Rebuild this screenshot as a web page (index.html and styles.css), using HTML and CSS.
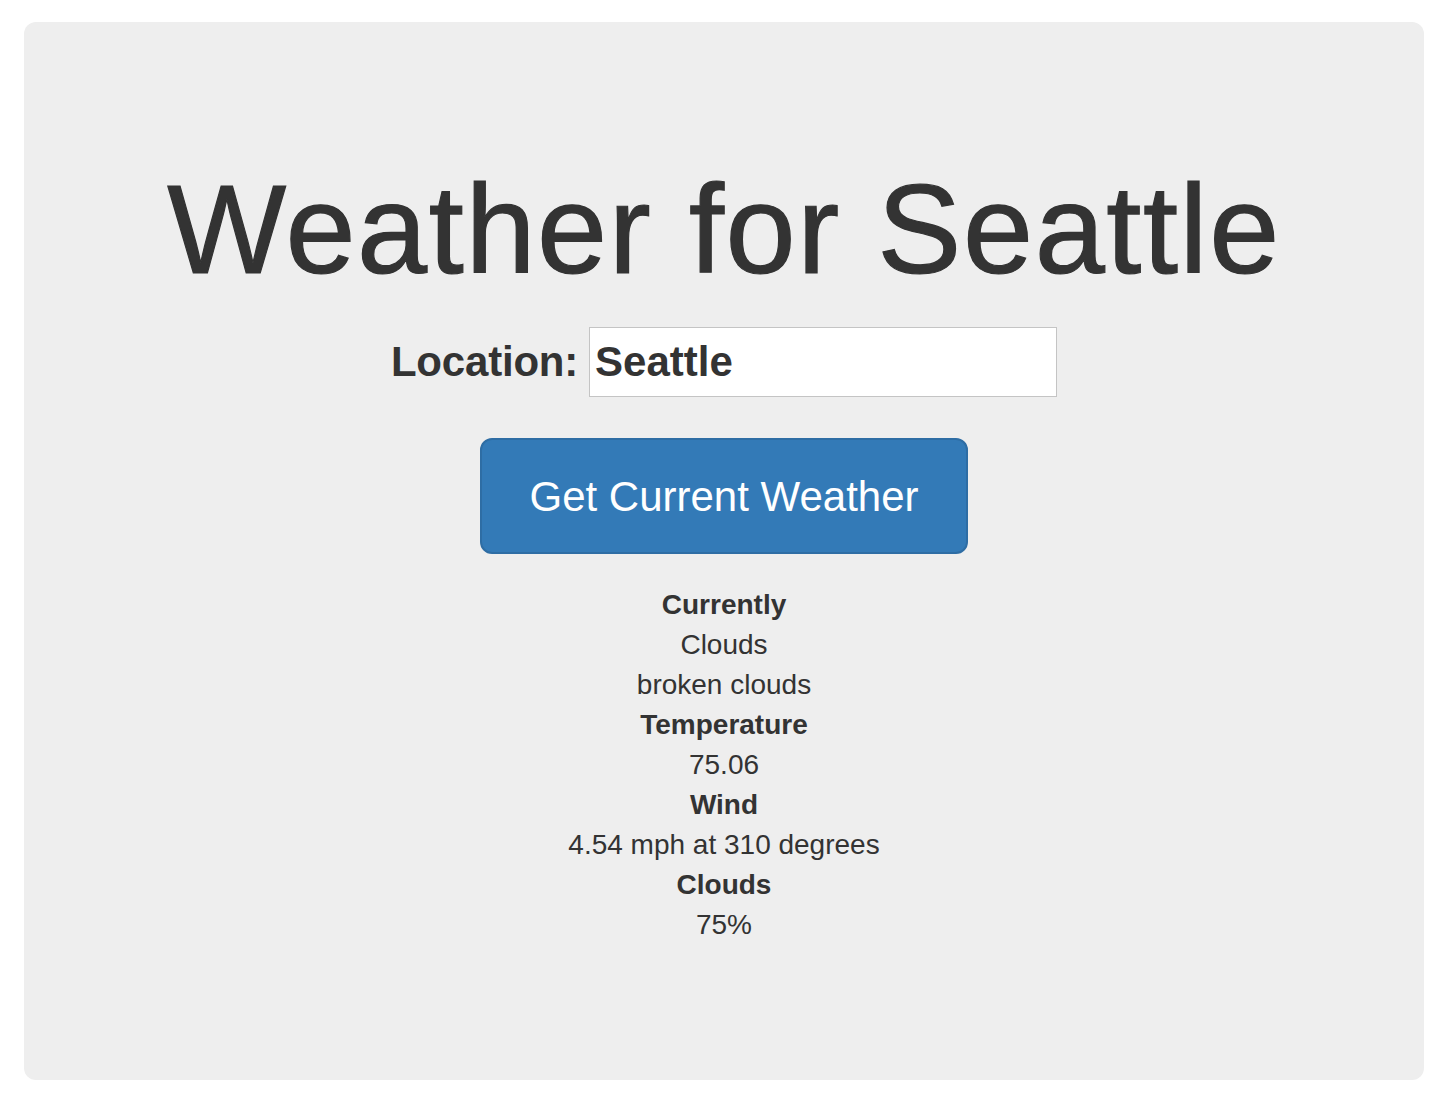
FILE: index.html
```html
<!DOCTYPE html>
<html>
<head>
<meta charset="utf-8">
<title>Weather</title>
<link rel="stylesheet" href="styles.css">
</head>
<body>
<div class="page">
  <div class="jumbotron">
    <h1 class="title">Weather for Seattle</h1>
    <div class="location-row">
      <label class="location-label" for="loc">Location:</label>
      <input id="loc" class="location-input" type="text" value="Seattle">
    </div>
    <button class="btn-primary" type="button">Get Current Weather</button>
    <div class="results">
      <div class="label">Currently</div>
      <div>Clouds</div>
      <div>broken clouds</div>
      <div class="label">Temperature</div>
      <div>75.06</div>
      <div class="label">Wind</div>
      <div>4.54 mph at 310 degrees</div>
      <div class="label">Clouds</div>
      <div>75%</div>
    </div>
  </div>
</div>
</body>
</html>
```

FILE: styles.css
```css
html, body {
  margin: 0;
  padding: 0;
  background: #ffffff;
}

body {
  font-family: "Helvetica Neue", "Liberation Sans", Arial, sans-serif;
  color: #333333;
}

.page {
  padding: 22px 28px 0 24px;
}

.jumbotron {
  box-sizing: border-box;
  height: 1058px;
  background: #eeeeee;
  border-radius: 12px;
  padding-top: 139px;
  display: flex;
  flex-direction: column;
  align-items: center;
}

.title {
  margin: 0;
  font-size: 126px;
  line-height: 1.1;
  font-weight: 500;
  letter-spacing: 1.6px;
  -webkit-text-stroke: 1.2px #333333;
  color: #333333;
}

.location-row {
  margin-top: 27px;
  display: flex;
  align-items: center;
  gap: 11px;
}

.location-label {
  font-size: 42px;
  font-weight: bold;
  letter-spacing: -0.2px;
  color: #333333;
}

.location-input {
  box-sizing: border-box;
  width: 468px;
  height: 70px;
  margin: 0;
  padding: 0 5px;
  border: 1px solid #c4c4c4;
  background: #ffffff;
  font-family: "Helvetica Neue", "Liberation Sans", Arial, sans-serif;
  font-size: 42px;
  font-weight: bold;
  color: #333333;
  outline: none;
}

.btn-primary {
  box-sizing: border-box;
  margin-top: 41px;
  width: 488px;
  height: 116px;
  padding: 3px 0 0;
  background: #337ab7;
  border: 2px solid #2e6da4;
  border-radius: 12px;
  color: #ffffff;
  font-family: "Helvetica Neue", "Liberation Sans", Arial, sans-serif;
  font-size: 42px;
  font-weight: normal;
  cursor: pointer;
}

.results {
  margin-top: 31px;
  font-size: 28px;
  line-height: 40px;
  text-align: center;
}

.results .label {
  font-weight: bold;
}
```
